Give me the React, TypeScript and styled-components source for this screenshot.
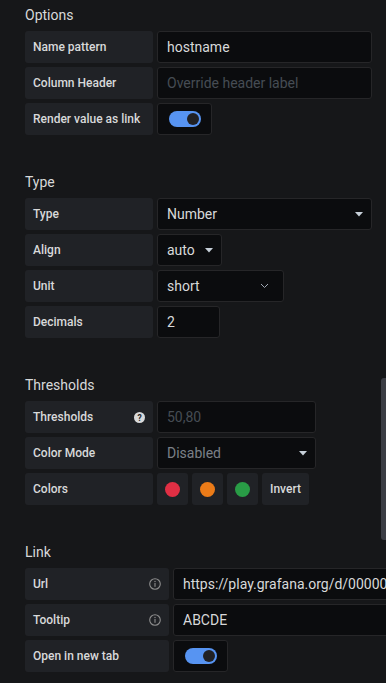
import React from 'react';
import styled, { createGlobalStyle } from 'styled-components';

const GlobalStyle = createGlobalStyle`
  html, body {
    margin: 0;
    padding: 0;
    background: #161719;
    font-family: Roboto, "Liberation Sans", sans-serif;
    overflow: hidden;
  }
`;

const Page = styled.div`
  position: relative;
  width: 386px;
  height: 683px;
  overflow: hidden;
  background: #161719;
  padding: 5px 0 0 25px;
  box-sizing: border-box;
`;

const Section = styled.section`
  margin-bottom: 37px;
`;

const Heading = styled.h5`
  margin: 0 0 6px;
  height: 20px;
  line-height: 20px;
  font-size: 14px;
  font-weight: 400;
  color: #d8d9da;
`;

const Rows = styled.div`
  display: flex;
  flex-direction: column;
  gap: 4px;
`;

const Row = styled.div`
  display: flex;
  gap: 4px;
  height: 32px;
  white-space: nowrap;
`;

const Label = styled.div<{ $w: number }>`
  width: ${p => p.$w}px;
  flex: none;
  box-sizing: border-box;
  display: flex;
  align-items: center;
  justify-content: space-between;
  padding: 0 8px;
  background: #202226;
  border-radius: 3px;
  font-size: 12px;
  font-weight: 500;
  color: #d8d9da;
`;

const Field = styled.div<{ $w: number; $muted?: boolean }>`
  width: ${p => p.$w}px;
  flex: none;
  box-sizing: border-box;
  display: flex;
  align-items: center;
  justify-content: space-between;
  padding: 0 8px 0 9px;
  background: #0b0c0e;
  border: 1px solid #262628;
  border-radius: 3px;
  font-size: 14px;
  color: ${p => (p.$muted ? '#464c54' : '#d8d9da')};
  overflow: hidden;
`;

const ToggleBox = styled.div`
  width: 55px;
  flex: none;
  box-sizing: border-box;
  display: flex;
  align-items: center;
  padding-left: 11px;
  background: #0b0c0e;
  border: 1px solid #262628;
  border-radius: 3px;
`;

const Track = styled.div`
  width: 32px;
  height: 16px;
  border-radius: 8px;
  background: #5794f2;
  display: flex;
  align-items: center;
  justify-content: flex-end;
  padding-right: 2px;
  box-sizing: border-box;
`;

const Knob = styled.div`
  width: 12px;
  height: 12px;
  border-radius: 50%;
  background: #212124;
`;

const SwatchButton = styled.div`
  width: 31px;
  flex: none;
  display: flex;
  align-items: center;
  justify-content: center;
  background: #202226;
  border-radius: 3px;
`;

const Dot = styled.span<{ $c: string }>`
  width: 15px;
  height: 15px;
  border-radius: 50%;
  background: ${p => p.$c};
`;

const TextButton = styled.div`
  width: 47px;
  flex: none;
  display: flex;
  align-items: center;
  justify-content: center;
  background: #202226;
  border-radius: 3px;
  font-size: 12px;
  font-weight: 500;
  color: #d8d9da;
`;

const Scrollbar = styled.div`
  position: absolute;
  right: 0;
  top: 378px;
  width: 5px;
  height: 162px;
  background: #3b3d44;
  border-radius: 3px 0 0 3px;
`;

const Caret = () => (
  <svg width="8" height="5" viewBox="0 0 8 5">
    <path d="M0 0h8L4 4.5z" fill="#c7d0d9" />
  </svg>
);

const Chevron = () => (
  <svg width="9" height="6" viewBox="0 0 9 6">
    <path d="M1 1l3.5 3.5L8 1" fill="none" stroke="#9fa7b3" strokeWidth="1" />
  </svg>
);

const HelpIcon = () => (
  <svg width="11" height="11" viewBox="0 0 11 11">
    <circle cx="5.5" cy="5.5" r="5.5" fill="#d8d9da" />
    <text x="5.5" y="8.6" textAnchor="middle" fontSize="8.5" fontWeight="700" fill="#202226" fontFamily="Roboto, sans-serif">?</text>
  </svg>
);

const InfoIcon = () => (
  <svg width="12" height="12" viewBox="0 0 12 12">
    <circle cx="6" cy="6" r="5.3" fill="none" stroke="#8e8e8e" strokeWidth="1.1" />
    <rect x="5.45" y="5" width="1.1" height="3.8" fill="#8e8e8e" />
    <circle cx="6" cy="3.5" r="0.7" fill="#8e8e8e" />
  </svg>
);

const Toggle = () => (
  <ToggleBox>
    <Track>
      <Knob />
    </Track>
  </ToggleBox>
);

export default function App() {
  return (
    <>
      <GlobalStyle />
      <Page>
        <Section>
          <Heading>Options</Heading>
          <Rows>
            <Row>
              <Label $w={128}>Name pattern</Label>
              <Field $w={215}>hostname</Field>
            </Row>
            <Row>
              <Label $w={128}>Column Header</Label>
              <Field $w={215} $muted>Override header label</Field>
            </Row>
            <Row>
              <Label $w={128}>Render value as link</Label>
              <Toggle />
            </Row>
          </Rows>
        </Section>

        <Section>
          <Heading>Type</Heading>
          <Rows>
            <Row>
              <Label $w={128}>Type</Label>
              <Field $w={215}>Number<Caret /></Field>
            </Row>
            <Row>
              <Label $w={128}>Align</Label>
              <Field $w={65}>auto<Caret /></Field>
            </Row>
            <Row>
              <Label $w={128}>Unit</Label>
              <Field $w={127} style={{ paddingRight: 14 }}>short<Chevron /></Field>
            </Row>
            <Row>
              <Label $w={128}>Decimals</Label>
              <Field $w={63}>2</Field>
            </Row>
          </Rows>
        </Section>

        <Section>
          <Heading>Thresholds</Heading>
          <Rows>
            <Row>
              <Label $w={128}>Thresholds<HelpIcon /></Label>
              <Field $w={159} $muted>50,80</Field>
            </Row>
            <Row>
              <Label $w={128}>Color Mode</Label>
              <Field $w={159} style={{ color: '#7b8087' }}>Disabled<Caret /></Field>
            </Row>
            <Row>
              <Label $w={128}>Colors</Label>
              <SwatchButton><Dot $c="#e02f44" /></SwatchButton>
              <SwatchButton><Dot $c="#eb7b18" /></SwatchButton>
              <SwatchButton><Dot $c="#299c46" /></SwatchButton>
              <TextButton>Invert</TextButton>
            </Row>
          </Rows>
        </Section>

        <Section>
          <Heading>Link</Heading>
          <Rows>
            <Row>
              <Label $w={144}>Url<InfoIcon /></Label>
              <Field $w={300}>https://play.grafana.org/d/000000012/grafana-play-home</Field>
            </Row>
            <Row>
              <Label $w={144}>Tooltip<InfoIcon /></Label>
              <Field $w={300}>ABCDE</Field>
            </Row>
            <Row>
              <Label $w={144}>Open in new tab</Label>
              <Toggle />
            </Row>
          </Rows>
        </Section>
        <Scrollbar />
      </Page>
    </>
  );
}
